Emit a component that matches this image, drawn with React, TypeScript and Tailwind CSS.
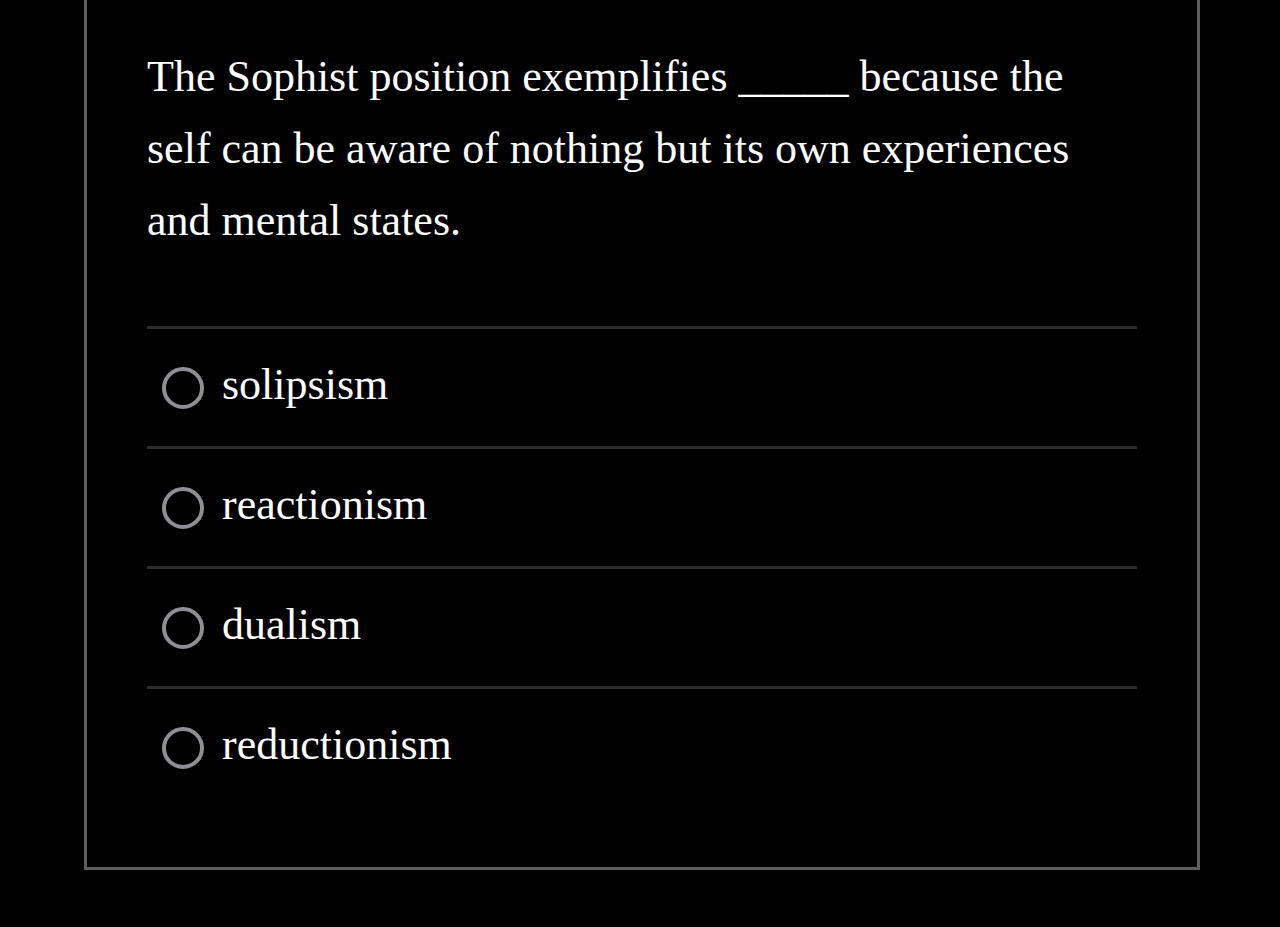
import React from 'react';

const options = ['solipsism', 'reactionism', 'dualism', 'reductionism'];

const App: React.FC = () => {
  return (
    <div className="min-h-[927px] bg-black font-['Liberation_Serif','Times_New_Roman',serif] text-white">
      <div className="ml-[84px] w-[1116px] border-x-[3px] border-b-[3px] border-[#5e5e5e] px-[60px] pt-[41px] pb-[61px]">
        {/* question */}
        <p className="text-[44px] leading-[72px]">
          The Sophist position exemplifies _____ because the self can be aware of nothing but its own experiences and
          mental states.
        </p>

        <div className="mt-[69px]">
          {options.map((opt) => (
            <div key={opt} className="border-t-[3px] border-[#2b2b2b]">
              <label className="flex h-[117px] items-center pl-[15px]">
                <span className="h-[42px] w-[42px] shrink-0 rounded-full border-[4px] border-[#8e8e93]" />
                <span className="ml-[18px] -mt-[6px] text-[44px] leading-none">{opt}</span>
              </label>
            </div>
          ))}
        </div>
      </div>
    </div>
  );
};

export default App;
